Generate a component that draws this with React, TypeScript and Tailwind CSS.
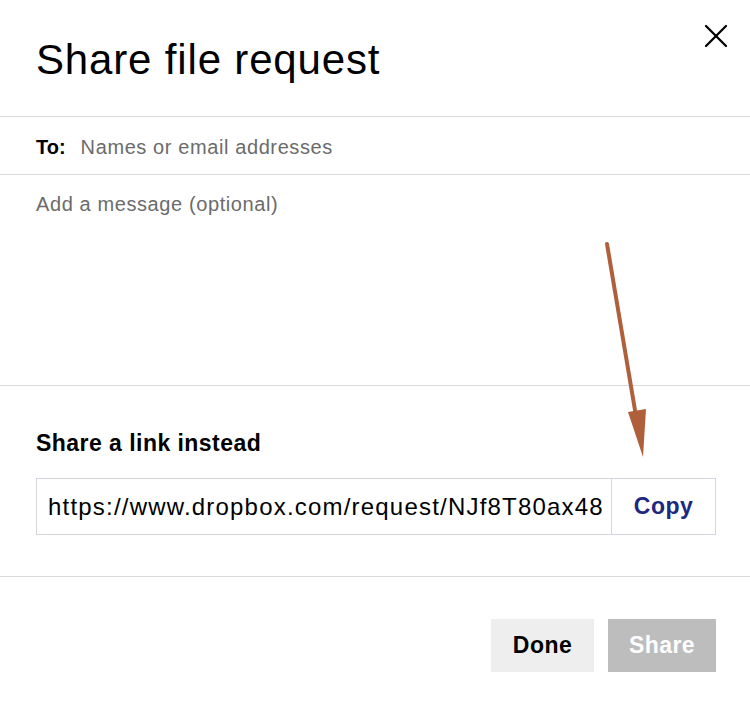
import { X } from "lucide-react";

const font = { fontFamily: '"Liberation Sans", Arial, sans-serif' };

function Arrow() {
  return (
    <svg
      className="pointer-events-none absolute left-0 top-0"
      width="750"
      height="709"
      viewBox="0 0 750 709"
    >
      <line x1="607" y1="244" x2="636" y2="416" stroke="#b05f3b" strokeWidth="4" strokeLinecap="round" />
      <polygon points="628,412 646,409 643,457" fill="#b05f3b" />
    </svg>
  );
}

export default function App() {
  return (
    <div className="relative h-[709px] w-[750px] overflow-hidden bg-white text-black" style={font}>
      <header className="flex h-[117px] items-center border-b border-[#d9d9d9] px-[36px] pt-[3px]">
        <h1 className="text-[42px] leading-none tracking-[0.02em]">Share file request</h1>
        <button className="absolute left-[696px] top-[16px] text-black">
          <X size={40} strokeWidth={1.35} />
        </button>
      </header>

      <div className="flex h-[58px] items-center gap-[15px] border-b border-[#d9d9d9] px-[36px] pt-[2px] text-[20px] tracking-[0.03em]">
        <span className="font-bold tracking-normal">To:</span>
        <span className="text-[#6b6b6b]">Names or email addresses</span>
      </div>

      <div className="h-[211px] border-b border-[#d9d9d9] px-[36px] pt-[14px] text-[20px] tracking-[0.03em] text-[#6b6b6b]">
        Add a message (optional)
      </div>

      <section className="border-b border-[#d9d9d9] pb-[41px] pl-[36px] pr-[34px] pt-[43px]">
        <h2 className="text-[23px] font-bold leading-[28px] tracking-[0.02em]">Share a link instead</h2>
        <div className="mt-[21px] flex h-[57px] border border-[#d3d6dc]">
          <div className="flex min-w-0 flex-1 items-center pl-[11px] pr-[9px]">
            <span className="block overflow-hidden whitespace-nowrap text-[24px] tracking-[0.05em]">
              https://www.dropbox.com/request/NJf8T80ax48Ywq
            </span>
          </div>
          <button className="w-[104px] border-l border-[#d3d6dc] text-[23px] font-bold tracking-[0.02em] text-[#1b2a80]">
            Copy
          </button>
        </div>
      </section>

      <footer className="flex justify-end gap-[14px] px-[34px] pt-[42px]">
        <button className="h-[53px] w-[103px] bg-[#eeeeee] text-[23px] font-bold tracking-[0.02em]">Done</button>
        <button className="h-[53px] w-[108px] bg-[#bdbdbd] text-[23px] font-bold tracking-[0.02em] text-white">Share</button>
      </footer>

      <Arrow />
    </div>
  );
}
